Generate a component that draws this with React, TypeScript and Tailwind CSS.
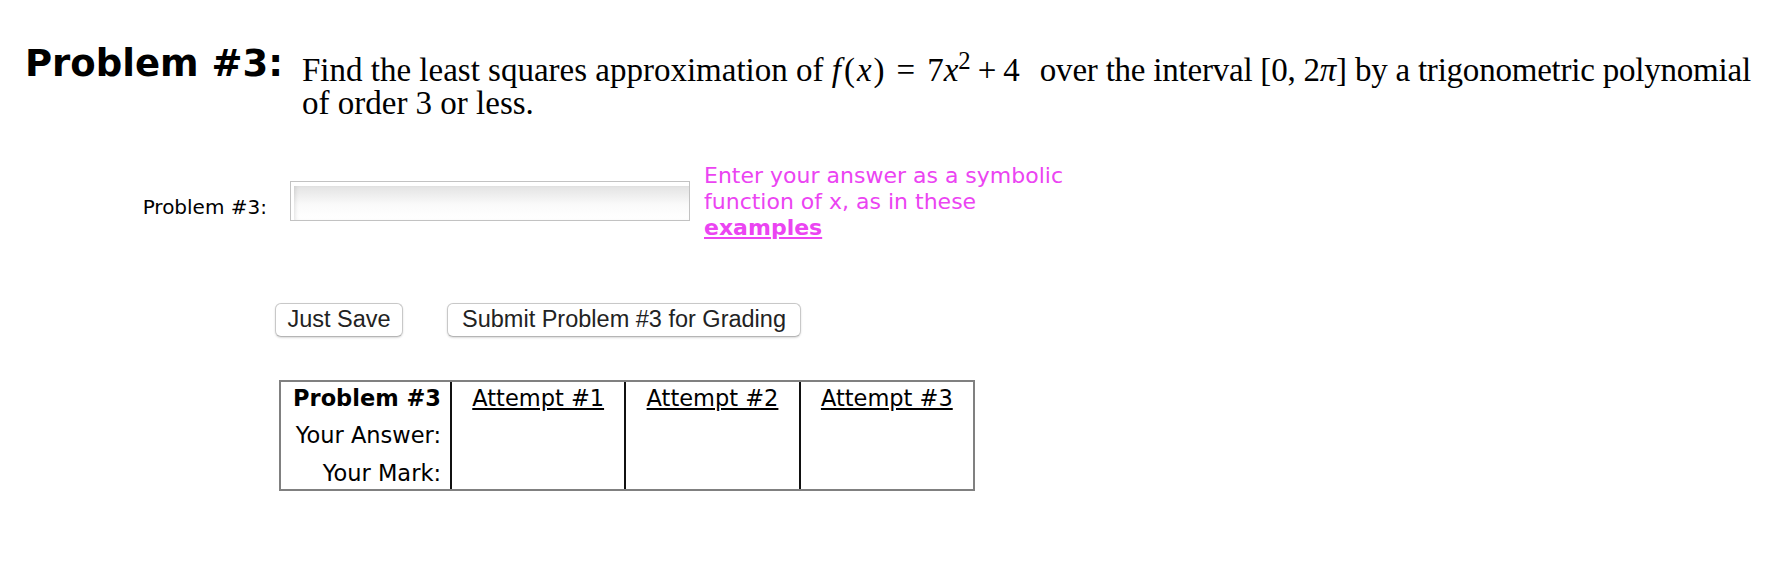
export default function App() {
  const attempts = ["Attempt #1", "Attempt #2", "Attempt #3"];

  return (
    <div className="min-h-screen bg-white text-black">
      {/* problem statement */}
      <div className="flex items-start pt-[44px]">
        <h1 className="w-[302px] shrink-0 pl-[25px] font-['DejaVu_Sans',sans-serif] text-[37px] font-bold leading-[40px]">
          Problem #3:
        </h1>
        <p className="mt-[10px] whitespace-nowrap font-['Liberation_Serif',serif] text-[33px] leading-[33px]">
          Find the least squares approximation of{" "}
          <span className="italic">f</span>
          <span className="ml-[3px]">(</span>
          <span className="mx-[2px] italic">x</span>)
          <span className="mx-[12px]">=</span>7<span className="italic">x</span>
          <sup>2</sup>
          <span className="ml-[7px] mr-[7px]">+</span>4
          <span className="ml-[20px] tracking-[-0.22px]">
            over the interval [0, 2<span className="italic">π</span>] by a trigonometric polynomial
          </span>
          <br />
          of order 3 or less.
        </p>
      </div>

      {/* answer row */}
      <div className="mt-[45px] flex items-start font-['DejaVu_Sans',sans-serif]">
        <div className="mt-[30px] w-[267px] shrink-0 text-right text-[20px] leading-[24px]">Problem #3:</div>
        <div className="ml-[23px] mt-[16px] h-[40px] w-[400px] shrink-0 border border-[#c2c2c2] bg-white pl-[3px] pt-[4px]">
          <div className="h-full w-full bg-linear-to-b from-[#e3e3e3] via-[#fafafa] via-[55%] to-white shadow-[inset_3px_0_4px_-2px_rgba(0,0,0,0.12)]" />
        </div>
        <div className="-mt-[2px] ml-[14px] text-[22px] leading-[26px] text-[#eb44f2]">
          Enter your answer as a symbolic
          <br />
          function of x, as in these
          <br />
          <span className="font-bold underline decoration-2 underline-offset-2">examples</span>
        </div>
      </div>

      {/* buttons */}
      <div className="mt-[62px] flex gap-[44px] pl-[275px] font-['Liberation_Sans',sans-serif] text-[23.5px] text-[#222]">
        <button className="h-[34px] w-[128px] rounded-[6px] border border-[#c8c8c8] border-b-[#b5b5b5] bg-white leading-none shadow-[0_1px_2px_rgba(0,0,0,0.15)]">
          Just Save
        </button>
        <button className="h-[34px] w-[354px] rounded-[6px] border border-[#c8c8c8] border-b-[#b5b5b5] bg-white leading-none shadow-[0_1px_2px_rgba(0,0,0,0.15)]">
          Submit Problem #3 for Grading
        </button>
      </div>

      {/* attempts table */}
      <div className="ml-[279px] mt-[43px] flex w-[696px] border-2 border-[#808080] font-['DejaVu_Sans',sans-serif] text-[22.5px] leading-[36px]">
        <div className="w-[169px] pr-[9px] text-right">
          <div className="h-[35px] leading-[33px] font-bold">Problem #3</div>
          <div className="h-[36px] pt-[1px] leading-[35px]">Your Answer:</div>
          <div className="h-[36px] pt-[4px] leading-[32px]">Your Mark:</div>
        </div>
        {attempts.map((a) => (
          <div key={a} className="flex-1 border-l-2 border-[#111] text-center">
            <div className="h-[35px] leading-[33px]">
              <span className="underline underline-offset-2">{a}</span>
            </div>
            <div className="h-[36px]" />
            <div className="h-[36px]" />
          </div>
        ))}
      </div>
    </div>
  );
}
